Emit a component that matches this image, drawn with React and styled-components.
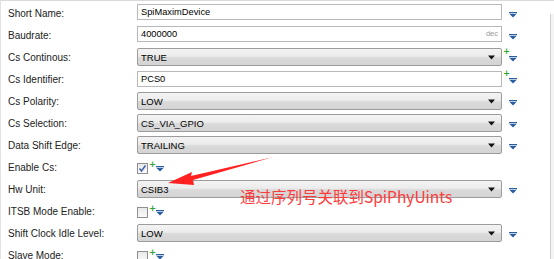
import React from "react";
import styled, { createGlobalStyle } from "styled-components";

const Global = createGlobalStyle`
  html, body { margin: 0; padding: 0; background: #fff; }
  body { font-family: "Liberation Sans", Arial, "Noto Sans CJK SC", sans-serif; }
`;

const Frame = styled.div`
  position: relative;
  width: 554px;
  height: 259px;
  overflow: hidden;
  box-sizing: border-box;
  border-top: 1px solid #dadada;
  border-left: 1px solid #e2e2e2;
  display: flex;
  background: #fff;
`;

const Form = styled.div`
  flex: 1;
  padding-top: 1px;
  display: flex;
  flex-direction: column;
`;

const ScrollStrip = styled.div`
  width: 3px;
  margin-top: 13px;
  border-left: 1px solid #cfcfcf;
  background: #f4f4f4;
`;

const Row = styled.div`
  flex: 0 0 22px;
  height: 22px;
  display: grid;
  grid-template-columns: 136px 365px 1fr;
  align-items: center;
`;

const Label = styled.div`
  padding-left: 7px;
  font-size: 10px;
  color: #222;
  white-space: nowrap;
`;

const TextBox = styled.div`
  position: relative;
  height: 16px;
  box-sizing: border-box;
  border: 1px solid #b9b9b9;
  background: #fff;
  font-size: 9.3px;
  color: #000;
  padding-left: 3px;
  line-height: 14px;
  margin-top: ${(p) => (p.$up ? "-3px" : "0")};
`;

const Unit = styled.span`
  position: absolute;
  right: 3px;
  top: 0;
  font-size: 7.5px;
  color: #9a9a9a;
`;

const Select = styled.div`
  height: 18px;
  box-sizing: border-box;
  border: 1px solid #9c9c9c;
  border-radius: 2px;
  background: linear-gradient(#f3f3f3 0%, #ececec 45%, #dadada 55%, #d4d4d4 100%);
  display: flex;
  align-items: center;
  justify-content: space-between;
  padding: 0 6px 0 3px;
  font-size: 9.5px;
  color: #000;
`;

const Deco = styled.div`
  position: relative;
  height: 100%;
  display: flex;
  align-items: center;
`;

const CheckCell = styled.div`
  display: flex;
  align-items: center;
  height: 100%;
`;

const Box = styled.div`
  width: 11px;
  height: 11px;
  box-sizing: border-box;
  border: 1px solid #8f8f8f;
  background: linear-gradient(#e9e9e9, #fafafa);
  display: flex;
  align-items: center;
  justify-content: center;
  margin-top: 2px;
`;

const Plus = styled.span`
  position: absolute;
  left: ${(p) => p.$x}px;
  top: ${(p) => p.$y}px;
  color: #2ea52e;
  font-family: "DejaVu Sans", sans-serif;
  font-size: 8.5px;
  font-weight: bold;
  line-height: 8px;
`;

const Overlay = styled.svg`
  position: absolute;
  left: 0;
  top: 0;
  pointer-events: none;
`;

const Note = styled.div`
  position: absolute;
  left: 239px;
  top: 184px;
  font-family: "Noto Sans CJK SC", "Noto Sans", sans-serif;
  font-size: 15.5px;
  color: #ff3a3a;
  white-space: nowrap;
`;

const Caret = () => (
  <svg width="7" height="5" viewBox="0 0 7 5">
    <path d="M0 0.5 L7 0.5 L3.5 4.5 Z" fill="#111" />
  </svg>
);

const BlueArrow = ({ style }) => (
  <svg width="8" height="6" viewBox="0 0 8 6" style={style}>
    <rect x="0" y="0" width="8" height="1.3" fill="#2b5e9e" />
    <path d="M0.5 2 L7.5 2 L4 5.5 Z" fill="#2b5e9e" />
  </svg>
);

const Check = () => (
  <svg width="9" height="9" viewBox="0 0 9 9">
    <path d="M1.5 4.5 L3.5 7 L7.5 1.5" stroke="#3a5fa8" strokeWidth="1.4" fill="none" />
  </svg>
);

const FieldDeco = ({ star }) => (
  <Deco>
    {star && <Plus $x={1} $y={1}>+</Plus>}
    <BlueArrow style={{ marginLeft: 7, marginTop: 3 }} />
  </Deco>
);

const CheckField = ({ checked }) => (
  <CheckCell>
    <Box>{checked && <Check />}</Box>
    <span style={{ position: "relative", width: 18, height: "100%" }}>
      <Plus $x={1} $y={4}>+</Plus>
      <BlueArrow style={{ position: "absolute", left: 8, top: 10 }} />
    </span>
  </CheckCell>
);

const rows = [
  { label: "Short Name:", type: "text", value: "SpiMaximDevice", up: true },
  { label: "Baudrate:", type: "text", value: "4000000", unit: "dec", up: true },
  { label: "Cs Continous:", type: "select", value: "TRUE", star: true },
  { label: "Cs Identifier:", type: "text", value: "PCS0", star: true },
  { label: "Cs Polarity:", type: "select", value: "LOW" },
  { label: "Cs Selection:", type: "select", value: "CS_VIA_GPIO" },
  { label: "Data Shift Edge:", type: "select", value: "TRAILING" },
  { label: "Enable Cs:", type: "check", checked: true },
  { label: "Hw Unit:", type: "select", value: "CSIB3" },
  { label: "ITSB Mode Enable:", type: "check" },
  { label: "Shift Clock Idle Level:", type: "select", value: "LOW" },
  { label: "Slave Mode:", type: "check" },
];

export default function App() {
  return (
    <>
      <Global />
      <Frame>
        <Form>
          {rows.map((r) => (
            <Row key={r.label}>
              <Label>{r.label}</Label>
              {r.type === "text" && (
                <TextBox $up={r.up}>
                  {r.value}
                  {r.unit && <Unit>{r.unit}</Unit>}
                </TextBox>
              )}
              {r.type === "select" && (
                <Select>
                  <span>{r.value}</span>
                  <Caret />
                </Select>
              )}
              {r.type === "check" ? (
                <CheckField checked={r.checked} />
              ) : (
                <FieldDeco star={r.star} />
              )}
              {r.type === "check" && <span />}
            </Row>
          ))}
        </Form>
        <ScrollStrip />
        <Overlay width="554" height="259" viewBox="0 0 554 259">
          <path d="M272 156 L190 175 L191 171 L167 182 L193 184 L192 179 Z" fill="#ff2020" />
        </Overlay>
        <Note>通过序列号关联到SpiPhyUints</Note>
      </Frame>
    </>
  );
}
